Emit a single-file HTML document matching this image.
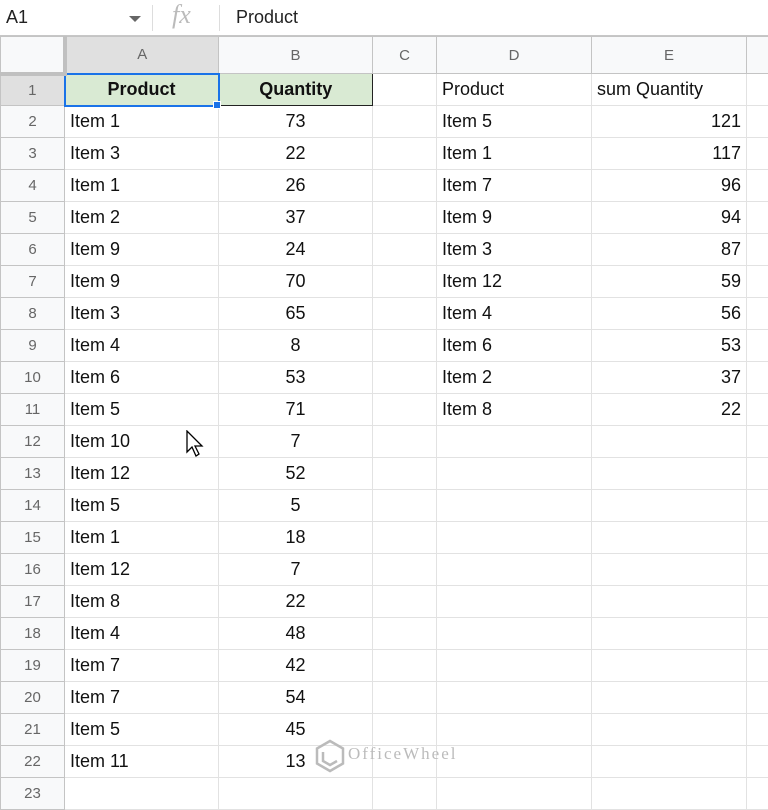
<!DOCTYPE html>
<html><head><meta charset="utf-8"><style>
*{margin:0;padding:0;box-sizing:border-box}
body{width:768px;height:794px;overflow:hidden;background:#fff;font-family:"Liberation Sans",Arial,sans-serif;position:relative}
#fb{position:absolute;left:0;top:0;width:768px;height:36px;border-bottom:1px solid #c7c7c7;background:#fff}
#fb .nm{position:absolute;left:6px;top:7px;font-size:18px;color:#222}
#fb .dd{position:absolute;left:129px;top:16px;width:0;height:0;border-left:6px solid transparent;border-right:6px solid transparent;border-top:6px solid #666}
#fb .s1{position:absolute;left:152px;top:5px;width:1px;height:26px;background:#ddd}
#fb .fx{position:absolute;left:172px;top:0px;font-family:"Liberation Serif",serif;font-style:italic;font-size:26px;color:#bbb}
#fb .s2{position:absolute;left:219px;top:5px;width:1px;height:26px;background:#ddd}
#fb .tx{position:absolute;left:236px;top:7px;font-size:18px;color:#222}
table{position:absolute;left:0;top:36px;border-collapse:collapse;table-layout:fixed;width:786px}
td{border:1px solid #e2e2e2;height:32px;font-size:18px;color:#111;padding:0 5px;white-space:nowrap;overflow:hidden}
tr.h td{height:37px;background:#f8f9fa;border-color:#c4c4c4;color:#666;font-size:15px;text-align:center}
td.rh{background:#f8f9fa;border-color:#c4c4c4;color:#666;font-size:15px;text-align:center;padding:0}
td.r{text-align:right}
td.c{text-align:center}
.hd{background:#d9ead3!important;font-weight:bold;text-align:center}
</style></head><body>
<div id="fb"><span class="nm">A1</span><span class="dd"></span><span class="s1"></span><span class="fx">fx</span><span class="s2"></span><span class="tx">Product</span></div>
<table>
<colgroup><col style="width:64px"><col style="width:154px"><col style="width:154px"><col style="width:64px"><col style="width:155px"><col style="width:155px"><col style="width:40px"></colgroup>
<tr class="h"><td style="border-right:4px solid #c0c0c0;border-bottom:4px solid #c0c0c0"></td><td style="background:#e0e0e0">A</td><td>B</td><td>C</td><td>D</td><td>E</td><td></td></tr>
<tr><td class="rh" style="background:#e0e0e0">1</td><td class="hd" style="border:2px solid #1a73e8">Product</td><td class="hd" style="border:1px solid #222">Quantity</td><td></td><td>Product</td><td>sum Quantity</td><td></td></tr>
<tr><td class="rh">2</td><td>Item 1</td><td class="c">73</td><td></td><td>Item 5</td><td class="r">121</td><td></td></tr>
<tr><td class="rh">3</td><td>Item 3</td><td class="c">22</td><td></td><td>Item 1</td><td class="r">117</td><td></td></tr>
<tr><td class="rh">4</td><td>Item 1</td><td class="c">26</td><td></td><td>Item 7</td><td class="r">96</td><td></td></tr>
<tr><td class="rh">5</td><td>Item 2</td><td class="c">37</td><td></td><td>Item 9</td><td class="r">94</td><td></td></tr>
<tr><td class="rh">6</td><td>Item 9</td><td class="c">24</td><td></td><td>Item 3</td><td class="r">87</td><td></td></tr>
<tr><td class="rh">7</td><td>Item 9</td><td class="c">70</td><td></td><td>Item 12</td><td class="r">59</td><td></td></tr>
<tr><td class="rh">8</td><td>Item 3</td><td class="c">65</td><td></td><td>Item 4</td><td class="r">56</td><td></td></tr>
<tr><td class="rh">9</td><td>Item 4</td><td class="c">8</td><td></td><td>Item 6</td><td class="r">53</td><td></td></tr>
<tr><td class="rh">10</td><td>Item 6</td><td class="c">53</td><td></td><td>Item 2</td><td class="r">37</td><td></td></tr>
<tr><td class="rh">11</td><td>Item 5</td><td class="c">71</td><td></td><td>Item 8</td><td class="r">22</td><td></td></tr>
<tr><td class="rh">12</td><td>Item 10</td><td class="c">7</td><td></td><td></td><td></td><td></td></tr>
<tr><td class="rh">13</td><td>Item 12</td><td class="c">52</td><td></td><td></td><td></td><td></td></tr>
<tr><td class="rh">14</td><td>Item 5</td><td class="c">5</td><td></td><td></td><td></td><td></td></tr>
<tr><td class="rh">15</td><td>Item 1</td><td class="c">18</td><td></td><td></td><td></td><td></td></tr>
<tr><td class="rh">16</td><td>Item 12</td><td class="c">7</td><td></td><td></td><td></td><td></td></tr>
<tr><td class="rh">17</td><td>Item 8</td><td class="c">22</td><td></td><td></td><td></td><td></td></tr>
<tr><td class="rh">18</td><td>Item 4</td><td class="c">48</td><td></td><td></td><td></td><td></td></tr>
<tr><td class="rh">19</td><td>Item 7</td><td class="c">42</td><td></td><td></td><td></td><td></td></tr>
<tr><td class="rh">20</td><td>Item 7</td><td class="c">54</td><td></td><td></td><td></td><td></td></tr>
<tr><td class="rh">21</td><td>Item 5</td><td class="c">45</td><td></td><td></td><td></td><td></td></tr>
<tr><td class="rh">22</td><td>Item 11</td><td class="c">13</td><td></td><td></td><td></td><td></td></tr>
<tr><td class="rh">23</td><td></td><td></td><td></td><td></td><td></td><td></td></tr>
</table>
<div style="position:absolute;left:213px;top:101px;width:8px;height:8px;background:#1a73e8;border:1px solid #fff"></div>
<svg style="position:absolute;left:185px;top:430px" width="24" height="32" viewBox="0 0 24 32"><path d="M2 1 L2 22 L7 17 L11 26 L14 24 L10 16 L17 16 Z" fill="#fff" stroke="#000" stroke-width="1.3"/></svg>
<svg style="position:absolute;left:313px;top:739px" width="34" height="34" viewBox="0 0 34 34"><path d="M17 2 L30 9.5 L30 24.5 L17 32 L4 24.5 L4 9.5 Z M10 13 L10 22 L17 26 L24 22" fill="none" stroke="#bbb" stroke-width="2.5"/></svg>
<div style="position:absolute;left:348px;top:744px;font-family:'Liberation Serif',serif;font-size:17px;letter-spacing:2px;color:#bbb">OfficeWheel</div>
</body></html>
